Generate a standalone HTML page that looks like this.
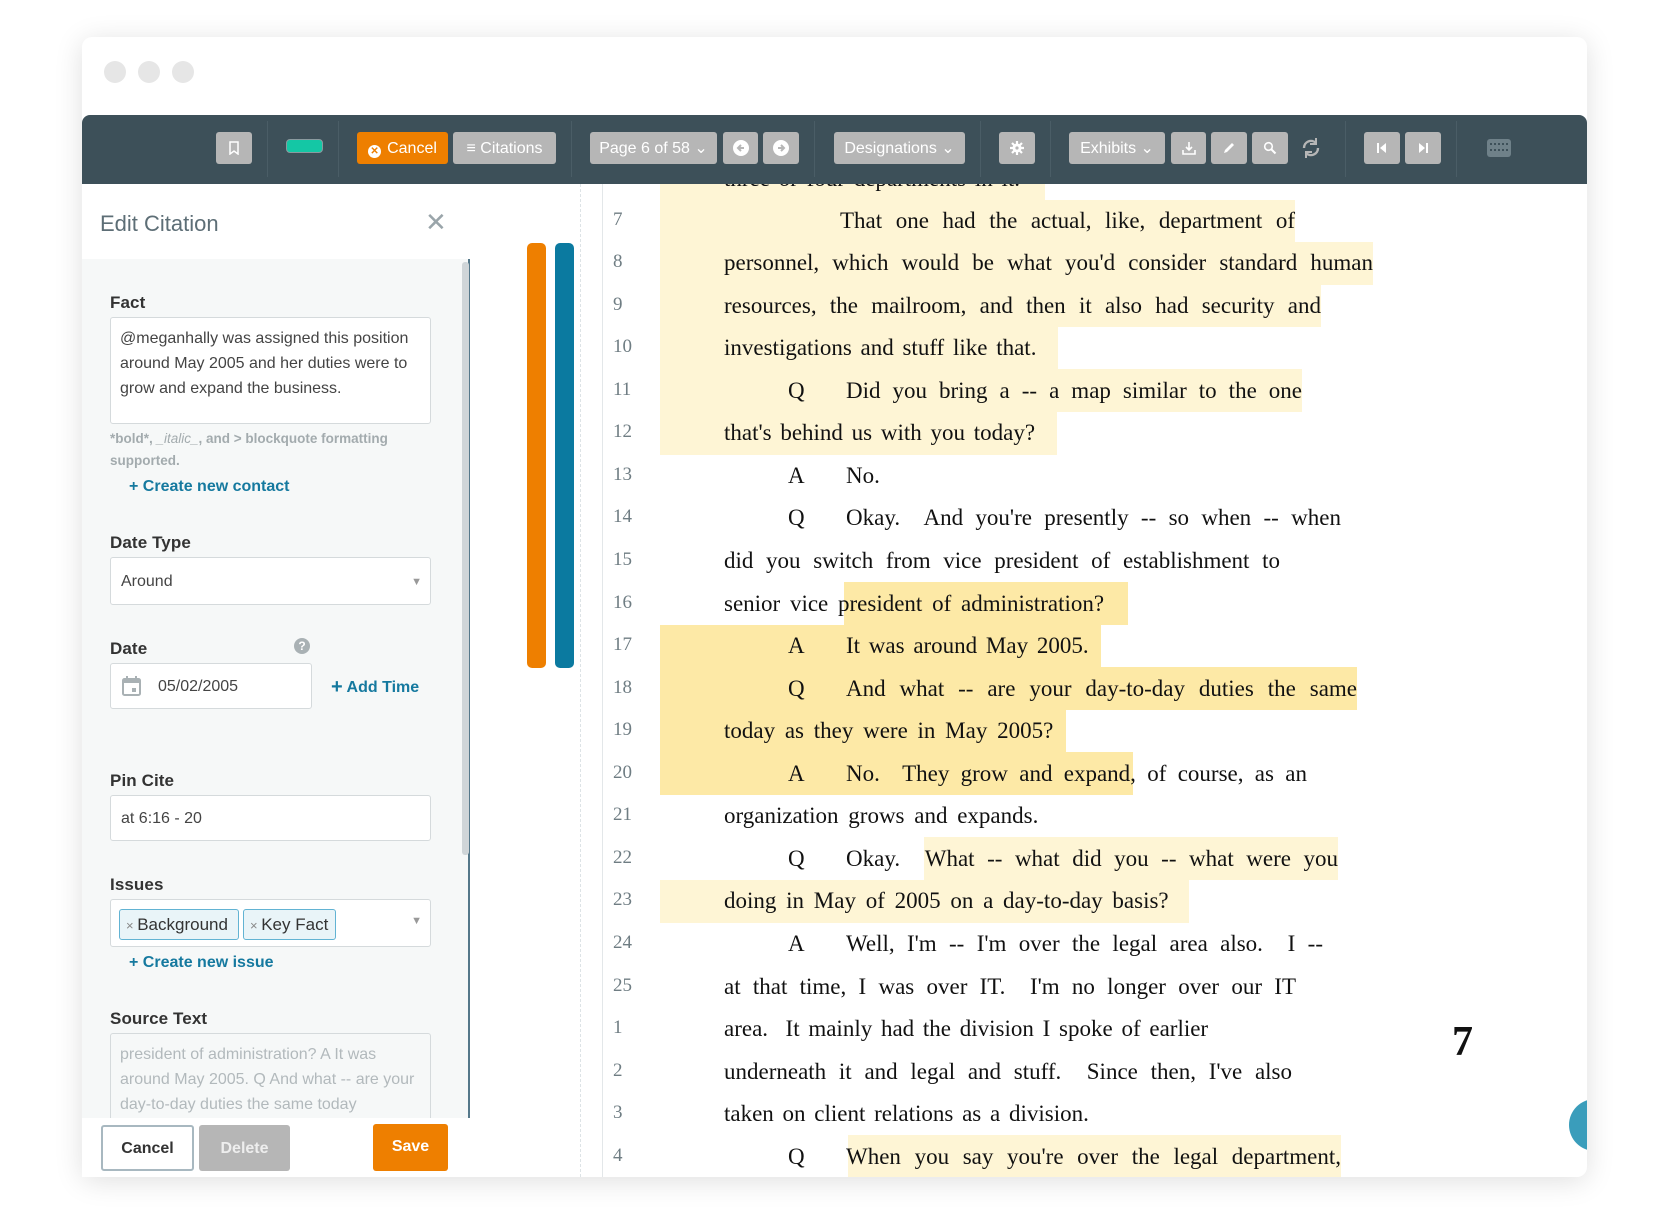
<!DOCTYPE html>
<html><head><meta charset="utf-8">
<style>
*{box-sizing:border-box;margin:0;padding:0}
body{width:1668px;height:1216px;background:#fff;position:relative;overflow:hidden;font-family:"Liberation Sans",sans-serif}
.win{position:absolute;left:82px;top:37px;width:1505px;height:1140px;border-radius:10px;background:#fff;box-shadow:0 4px 28px rgba(0,0,0,.13);overflow:hidden}
.dot{position:absolute;top:61px;width:22px;height:22px;border-radius:50%;background:#e6e6e6}
.tb{position:absolute;left:82px;top:115px;width:1505px;height:69px;background:#3d5059;border-radius:8px 8px 0 0}
.btn{position:absolute;top:132px;height:32px;background:#b6b6b6;border-radius:3px;color:#fff;font-family:"Liberation Sans Narrow","Liberation Sans",sans-serif;font-size:16px;line-height:34px;text-align:center}
.sep{position:absolute;top:121px;width:1px;height:56px;background:#4a5d66}
.a{position:absolute}
.panel{position:absolute;left:82px;top:184px;width:388px;height:993px;background:#f6f8f8;border-right:2px solid #55788a}
.lbl{position:absolute;left:110px;font-size:17px;color:#333;font-weight:bold;letter-spacing:.1px}
.inp{position:absolute;left:110px;width:321px;background:#fff;border:1px solid #d5dadc;border-radius:3px;font-size:16px;color:#444}
.link{position:absolute;color:#15799f;font-size:16px;font-weight:bold}
.ln{position:absolute;left:603px;width:40px;font-family:"Liberation Serif",serif;font-size:19px;color:#6f7d83;text-align:left;padding-left:10px}
.row{position:absolute;left:724px;font-family:"Liberation Serif",serif;font-size:23px;color:#111;white-space:nowrap;height:30px;line-height:30px}
.j{text-align:justify;text-align-last:justify;white-space:normal}
.hl{position:absolute;background:#fef5d5}
.hd{position:absolute;background:#fde9a6}
.qa{display:inline-block;width:122px;padding-left:64px}
.top{z-index:5}
</style></head><body>
<div class="win"></div>
<div class="dot" style="left:104px"></div><div class="dot" style="left:138px"></div><div class="dot" style="left:172px"></div>

<!-- left panel -->
<div class="panel"></div>
<div class="a" style="left:82px;top:184px;width:388px;height:75px;background:#fff"></div>
<div class="a" style="left:100px;top:211px;font-size:22px;color:#5d6e76">Edit Citation</div>
<div class="a" style="left:425px;top:207px;font-size:26px;color:#9aa5aa;font-weight:300">✕</div>
<div class="a" style="left:462px;top:262px;width:7px;height:593px;background:#cfd5d8;border-radius:3px"></div>

<div class="lbl" style="top:293px">Fact</div>
<div class="inp" style="top:317px;height:107px;padding:8px 9px;line-height:25px">@meganhally was assigned this position around May 2005 and her duties were to grow and expand the business.</div>
<div class="a" style="left:110px;top:428px;width:320px;font-size:13.5px;color:#a3abae;line-height:22px;font-weight:bold">*bold*, <i style="font-weight:normal">_italic_</i>, and &gt; blockquote formatting supported.</div>
<div class="link" style="left:129px;top:478px">+ Create new contact</div>

<div class="lbl" style="top:533px">Date Type</div>
<div class="inp" style="top:557px;height:48px;padding-left:10px;line-height:48px">Around<span style="position:absolute;right:8px;color:#999;font-size:11px">▼</span></div>

<div class="lbl" style="top:639px">Date</div>
<div class="a" style="left:294px;top:638px;width:16px;height:16px;border-radius:50%;background:#a9b1b4;color:#fff;font-size:12px;line-height:16px;text-align:center;font-weight:bold">?</div>
<div class="inp" style="top:663px;width:202px;height:46px;line-height:46px;padding-left:47px">05/02/2005</div>
<svg class="a" style="left:122px;top:676px" width="19" height="20" viewBox="0 0 19 20"><rect x="1" y="3" width="17" height="16" rx="1.5" fill="none" stroke="#a9b1b4" stroke-width="2"/><rect x="1" y="3" width="17" height="4" fill="#a9b1b4"/><rect x="4" y="0" width="2" height="5" fill="#a9b1b4"/><rect x="13" y="0" width="2" height="5" fill="#a9b1b4"/><rect x="10" y="12" width="4" height="4" fill="#a9b1b4"/></svg>
<div class="link" style="left:331px;top:676px;font-weight:bold"><span style="font-size:20px;vertical-align:-1px">+</span> Add Time</div>

<div class="lbl" style="top:771px">Pin Cite</div>
<div class="inp" style="top:795px;height:46px;line-height:46px;padding-left:10px">at 6:16 - 20</div>

<div class="lbl" style="top:875px">Issues</div>
<div class="inp" style="top:899px;height:48px"><span style="position:absolute;right:8px;top:15px;color:#999;font-size:11px">▼</span></div>
<div class="a" style="left:119px;top:909px;width:120px;height:31px;border:1px solid #62b3d3;border-radius:3px;background:#e9f4f8;font-size:17px;line-height:29px;color:#333;padding-left:6px"><span style="color:#888;font-size:13px">× </span>Background</div>
<div class="a" style="left:243px;top:909px;width:93px;height:31px;border:1px solid #62b3d3;border-radius:3px;background:#e9f4f8;font-size:17px;line-height:29px;color:#333;padding-left:6px"><span style="color:#888;font-size:13px">× </span>Key Fact</div>
<div class="link" style="left:129px;top:954px">+ Create new issue</div>

<div class="lbl" style="top:1009px">Source Text</div>
<div class="inp" style="top:1033px;height:100px;background:#f6f8f8;padding:8px 9px;line-height:25px;color:#b2b9bc">president of administration? A It was around May 2005. Q And what -- are your day-to-day duties the same today</div>

<div class="a" style="left:82px;top:1118px;width:388px;height:59px;background:#fff"></div>
<div class="a" style="left:101px;top:1125px;width:93px;height:46px;border:2px solid #a8b8c0;border-radius:3px;font-size:16px;line-height:44px;text-align:center;color:#333;font-weight:bold">Cancel</div>
<div class="a" style="left:199px;top:1125px;width:91px;height:46px;background:#b6b6b6;border-radius:3px;font-size:16px;line-height:48px;text-align:center;color:#eee;font-weight:bold">Delete</div>
<div class="a" style="left:373px;top:1124px;width:75px;height:47px;background:#ee7f00;border-radius:3px;font-size:16px;line-height:45px;text-align:center;color:#fff;font-weight:bold">Save</div>

<!-- gutter -->
<div class="a" style="left:527px;top:243px;width:19px;height:425px;background:#ee7f00;border-radius:5px"></div>
<div class="a" style="left:555px;top:243px;width:19px;height:425px;background:#0b7aa0;border-radius:5px"></div>
<div class="a" style="left:580px;top:184px;height:993px;border-left:1px dashed #dde3e6"></div>
<div class="a" style="left:602px;top:184px;height:993px;width:1px;background:#e3e7e9"></div>

<!-- highlights -->
<div class="hl" style="left:660px;top:184px;width:385px;height:16px"></div>
<div class="hl" style="left:660px;top:200px;width:635px;height:43px"></div>
<div class="hl" style="left:660px;top:242px;width:713px;height:43px"></div>
<div class="hl" style="left:660px;top:284px;width:661px;height:43px"></div>
<div class="hl" style="left:660px;top:327px;width:398px;height:43px"></div>
<div class="hl" style="left:660px;top:369px;width:642px;height:43px"></div>
<div class="hl" style="left:660px;top:412px;width:397px;height:43px"></div>
<div class="hd" style="left:844px;top:582px;width:284px;height:43px"></div>
<div class="hd" style="left:660px;top:625px;width:441px;height:43px"></div>
<div class="hd" style="left:660px;top:667px;width:697px;height:43px"></div>
<div class="hd" style="left:660px;top:710px;width:406px;height:43px"></div>
<div class="hd" style="left:660px;top:752px;width:473px;height:43px"></div>
<div class="hl" style="left:924px;top:837px;width:414px;height:43px"></div>
<div class="hl" style="left:660px;top:880px;width:529px;height:43px"></div>
<div class="hl" style="left:848px;top:1135px;width:493px;height:42px"></div>

<!-- line numbers -->
<div class="ln" style="top:209px">7</div>
<div class="ln" style="top:251px">8</div>
<div class="ln" style="top:294px">9</div>
<div class="ln" style="top:336px">10</div>
<div class="ln" style="top:379px">11</div>
<div class="ln" style="top:421px">12</div>
<div class="ln" style="top:464px">13</div>
<div class="ln" style="top:506px">14</div>
<div class="ln" style="top:549px">15</div>
<div class="ln" style="top:592px">16</div>
<div class="ln" style="top:634px">17</div>
<div class="ln" style="top:677px">18</div>
<div class="ln" style="top:719px">19</div>
<div class="ln" style="top:762px">20</div>
<div class="ln" style="top:804px">21</div>
<div class="ln" style="top:847px">22</div>
<div class="ln" style="top:889px">23</div>
<div class="ln" style="top:932px">24</div>
<div class="ln" style="top:975px">25</div>
<div class="ln" style="top:1017px">1</div>
<div class="ln" style="top:1060px">2</div>
<div class="ln" style="top:1102px">3</div>
<div class="ln" style="top:1145px">4</div>

<!-- transcript text -->
<div class="row" style="top:164px;height:30px;word-spacing:3px">three or four departments in it.</div>
<div class="row j" style="top:206px;left:840px;width:455px">That one had the actual, like, department of</div>
<div class="row j" style="top:248px;width:649px">personnel, which would be what you'd consider standard human</div>
<div class="row j" style="top:291px;width:597px">resources, the mailroom, and then it also had security and</div>
<div class="row" style="top:333px;word-spacing:3px">investigations and stuff like that.</div>
<div class="row j" style="top:376px;width:578px"><span class="qa">Q</span>Did you bring a -- a map similar to the one</div>
<div class="row" style="top:418px;word-spacing:3px">that's behind us with you today?</div>
<div class="row" style="top:461px"><span class="qa">A</span>No.</div>
<div class="row j" style="top:503px;width:617px"><span class="qa">Q</span>Okay.&nbsp; And you're presently -- so when -- when</div>
<div class="row j" style="top:546px;width:556px">did you switch from vice president of establishment to</div>
<div class="row" style="top:589px;word-spacing:4px">senior vice president of administration?</div>
<div class="row" style="top:631px;word-spacing:3px"><span class="qa">A</span>It was around May 2005.</div>
<div class="row j" style="top:674px;width:633px"><span class="qa">Q</span>And what -- are your day-to-day duties the same</div>
<div class="row" style="top:716px;word-spacing:4px">today as they were in May 2005?</div>
<div class="row j" style="top:759px;width:583px"><span class="qa">A</span>No.&nbsp; They grow and expand, of course, as an</div>
<div class="row" style="top:801px;word-spacing:4px">organization grows and expands.</div>
<div class="row j" style="top:844px;width:614px"><span class="qa">Q</span>Okay.&nbsp; What -- what did you -- what were you</div>
<div class="row" style="top:886px;word-spacing:4px">doing in May of 2005 on a day-to-day basis?</div>
<div class="row j" style="top:929px;width:599px"><span class="qa">A</span>Well, I'm -- I'm over the legal area also.&nbsp; I --</div>
<div class="row j" style="top:972px;width:572px">at that time, I was over IT.&nbsp; I'm no longer over our IT</div>
<div class="row" style="top:1014px;word-spacing:3px">area.&nbsp; It mainly had the division I spoke of earlier</div>
<div class="row j" style="top:1057px;width:568px">underneath it and legal and stuff.&nbsp; Since then, I've also</div>
<div class="row" style="top:1099px;word-spacing:3px">taken on client relations as a division.</div>
<div class="row j" style="top:1142px;width:617px"><span class="qa">Q</span>When you say you're over the legal department,</div>

<div class="a" style="left:1452px;top:1018px;font-family:'Liberation Serif',serif;font-size:42px;font-weight:bold;color:#111">7</div>
<div class="a" style="left:1569px;top:1099px;width:52px;height:52px;border-radius:50%;background:#3a9dbb;clip-path:inset(0 34px 0 0)"></div>

<!-- toolbar (on top) -->
<div class="tb top"></div>
<div class="btn top" style="left:216px;width:36px"><svg width="12" height="14" viewBox="0 0 12 14" style="margin-top:9px"><path d="M2 1h8v12l-4-3-4 3z" fill="none" stroke="#fff" stroke-width="1.5"/></svg></div>
<div class="sep top" style="left:267px"></div>
<div class="a top" style="left:286px;top:139px;width:37px;height:14px;border-radius:4px;background:#14c7a5;border:1.5px solid #8a9a9f"></div>
<div class="sep top" style="left:338px"></div>
<div class="btn top" style="left:357px;width:91px;background:#ee7f00"><span style="display:inline-block;width:13px;height:13px;border-radius:50%;background:#fff;color:#ee7f00;font-size:10px;line-height:13px;font-weight:bold;vertical-align:-1px;margin-right:6px">✕</span>Cancel</div>
<div class="btn top" style="left:453px;width:103px">≡ Citations</div>
<div class="sep top" style="left:571px"></div>
<div class="btn top" style="left:590px;width:127px">Page 6 of 58 ⌄</div>
<div class="btn top" style="left:723px;width:35px"><svg width="16" height="16" viewBox="0 0 16 16" style="margin-top:8px"><circle cx="8" cy="8" r="8" fill="#fff"/><path d="M11 8H5M8 5L5 8l3 3" fill="none" stroke="#b6b6b6" stroke-width="2"/></svg></div>
<div class="btn top" style="left:763px;width:36px"><svg width="16" height="16" viewBox="0 0 16 16" style="margin-top:8px"><circle cx="8" cy="8" r="8" fill="#fff"/><path d="M5 8h6M8 5l3 3-3 3" fill="none" stroke="#b6b6b6" stroke-width="2"/></svg></div>
<div class="sep top" style="left:814px"></div>
<div class="btn top" style="left:834px;width:131px">Designations ⌄</div>
<div class="sep top" style="left:980px"></div>
<div class="btn top" style="left:999px;width:36px"><svg width="14" height="14" viewBox="0 0 14 14" style="margin-top:9px"><circle cx="7" cy="7" r="4.5" fill="#fff"/><path d="M7 0v14M0 7h14M2 2l10 10M12 2L2 12" stroke="#fff" stroke-width="2.2"/><circle cx="7" cy="7" r="1.6" fill="#b6b6b6"/></svg></div>
<div class="sep top" style="left:1050px"></div>
<div class="btn top" style="left:1069px;width:96px">Exhibits ⌄</div>
<div class="btn top" style="left:1171px;width:35px"><svg width="14" height="14" viewBox="0 0 14 14" style="margin-top:9px"><path d="M7 1v8M4 6l3 3 3-3M1 9v4h12V9" fill="none" stroke="#fff" stroke-width="1.6"/></svg></div>
<div class="btn top" style="left:1211px;width:36px"><svg width="14" height="14" viewBox="0 0 14 14" style="margin-top:9px"><path d="M2 12l1-3 7-7 2 2-7 7z" fill="#fff"/></svg></div>
<div class="btn top" style="left:1252px;width:36px"><svg width="14" height="14" viewBox="0 0 14 14" style="margin-top:9px"><circle cx="5.5" cy="5.5" r="3.8" fill="none" stroke="#fff" stroke-width="1.6"/><path d="M8.5 8.5l4 4" stroke="#fff" stroke-width="2"/></svg></div>
<svg class="a top" style="left:1299px;top:136px" width="24" height="24" viewBox="0 0 24 24"><path d="M5 12a7 7 0 0 1 12-5M19 12a7 7 0 0 1-12 5" fill="none" stroke="#b6b6b6" stroke-width="2.4"/><path d="M17 2v6h-6M7 22v-6h6" fill="none" stroke="#b6b6b6" stroke-width="2"/></svg>
<div class="sep top" style="left:1345px"></div>
<div class="btn top" style="left:1364px;width:36px"><svg width="10" height="10" viewBox="0 0 10 10" style="margin-top:11px"><path d="M1 0v10" stroke="#fff" stroke-width="2"/><path d="M9 0v10L3 5z" fill="#fff"/></svg></div>
<div class="btn top" style="left:1405px;width:36px"><svg width="10" height="10" viewBox="0 0 10 10" style="margin-top:11px"><path d="M9 0v10" stroke="#fff" stroke-width="2"/><path d="M1 0v10l6-5z" fill="#fff"/></svg></div>
<div class="sep top" style="left:1456px"></div>
<div class="a top" style="left:1487px;top:139px;width:24px;height:18px;border-radius:3px;background:#6f8189"><div style="margin:4px 3px;height:8px;border-top:2px dotted #3d5059;border-bottom:2px dotted #3d5059"></div></div>
</body></html>
